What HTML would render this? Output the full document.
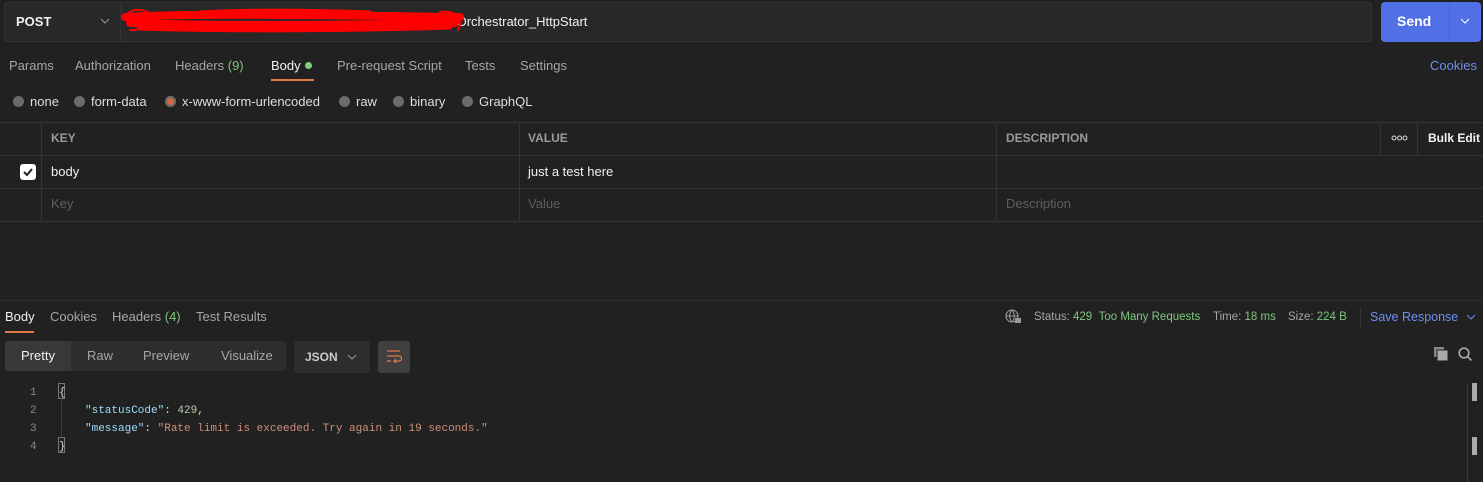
<!DOCTYPE html>
<html><head><meta charset="utf-8"><style>
*{margin:0;padding:0;box-sizing:border-box}
body{width:1483px;height:482px;background:#212121;font-family:"Liberation Sans",sans-serif;font-size:13px;color:#a6a6a6;position:relative;overflow:hidden}
.a{position:absolute;white-space:nowrap}
.w{color:#f2f2f2}
.g{color:#7ec67e}
.b{color:#6f8ef0}
.hl{position:absolute;height:1px;background:#343434}
.vl{position:absolute;width:1px;background:#343434}
.rd{position:absolute;width:11px;height:11px;border-radius:50%;background:#6b6b6b}
.mono{font-family:"Liberation Mono",monospace;font-size:11px}
</style></head><body>
<div class="a" style="left:4px;top:2px;width:1368px;height:40px;border:1px solid #353535;border-radius:4px;background:#282828"></div>
<div class="vl" style="left:120px;top:3px;height:38px"></div>
<div class="a w" style="left:16px;top:14px;font-weight:bold">POST</div>
<svg class="a" style="left:100px;top:18px" width="10" height="7"><path d="M1 1l4 4 4-4" stroke="#999" fill="none"/></svg>
<div class="a w" style="left:453px;top:14px;font-size:13px">/Orchestrator_HttpStart</div>
<svg class="a" style="left:110px;top:6px" width="360" height="30"><g stroke="#ff0000" fill="none" stroke-linecap="round"><path d="M15 11 C80 7 200 9 350 11" stroke-width="8"/><path d="M20 17 C100 20 250 19 345 17" stroke-width="8"/><path d="M30 22 C120 25 250 24 340 21" stroke-width="5"/><path d="M18 8 C22 2 35 3 40 8 C45 14 30 26 20 24 M330 6 C345 4 355 12 348 24" stroke-width="2"/><path d="M90 6 C140 3 200 4 260 6" stroke-width="3"/></g></svg>
<div class="a" style="left:1381px;top:2px;width:100px;height:40px;background:#5270e6;border-radius:4px"></div>
<div class="vl" style="left:1449px;top:2px;height:40px;background:#4a63cc"></div>
<div class="a" style="left:1397px;top:13px;color:#fff;font-weight:bold;font-size:14px">Send</div>
<svg class="a" style="left:1460px;top:18px" width="10" height="7"><path d="M1 1l4 4 4-4" stroke="#fff" fill="none"/></svg>
<div class="a" style="left:9px;top:58px">Params</div>
<div class="a" style="left:75px;top:58px">Authorization</div>
<div class="a" style="left:175px;top:58px">Headers <span class="g">(9)</span></div>
<div class="a w" style="left:271px;top:58px">Body</div>
<div class="a" style="left:305px;top:62px;width:7px;height:7px;border-radius:50%;background:#7ed07e"></div>
<div class="a" style="left:271px;top:79px;width:43px;height:2px;background:#e07a45"></div>
<div class="a" style="left:337px;top:58px">Pre-request Script</div>
<div class="a" style="left:465px;top:58px">Tests</div>
<div class="a" style="left:520px;top:58px">Settings</div>
<div class="a b" style="left:1430px;top:58px">Cookies</div>
<div class="rd" style="left:13px;top:96px"></div><div class="a" style="left:30px;top:94px;color:#ddd">none</div>
<div class="rd" style="left:74px;top:96px"></div><div class="a" style="left:91px;top:94px;color:#ddd">form-data</div>
<div class="rd" style="left:165px;top:96px;background:#d06a3a;box-shadow:0 0 0 2px #6b6b6b inset"></div><div class="a" style="left:182px;top:94px;color:#ddd">x-www-form-urlencoded</div>
<div class="rd" style="left:339px;top:96px"></div><div class="a" style="left:356px;top:94px;color:#ddd">raw</div>
<div class="rd" style="left:393px;top:96px"></div><div class="a" style="left:410px;top:94px;color:#ddd">binary</div>
<div class="rd" style="left:462px;top:96px"></div><div class="a" style="left:479px;top:94px;color:#ddd">GraphQL</div>
<div class="hl" style="left:0;top:122px;width:1483px"></div>
<div class="hl" style="left:0;top:155px;width:1483px"></div>
<div class="hl" style="left:0;top:188px;width:1483px"></div>
<div class="hl" style="left:0;top:221px;width:1483px"></div>
<div class="vl" style="left:41px;top:122px;height:99px"></div>
<div class="vl" style="left:519px;top:122px;height:99px"></div>
<div class="vl" style="left:996px;top:122px;height:99px"></div>
<div class="vl" style="left:1380px;top:122px;height:33px"></div>
<div class="vl" style="left:1417px;top:122px;height:33px"></div>
<div class="a" style="left:51px;top:131px;font-size:12px;font-weight:bold;color:#9a9a9a">KEY</div>
<div class="a" style="left:528px;top:131px;font-size:12px;font-weight:bold;color:#9a9a9a">VALUE</div>
<div class="a" style="left:1006px;top:131px;font-size:12px;font-weight:bold;color:#9a9a9a">DESCRIPTION</div>
<svg class="a" style="left:1391px;top:135px" width="17" height="6"><g stroke="#ddd" fill="none"><circle cx="3" cy="3" r="2"/><circle cx="8.5" cy="3" r="2"/><circle cx="14" cy="3" r="2"/></g></svg>
<div class="a w" style="left:1428px;top:131px;font-size:12px;font-weight:bold">Bulk Edit</div>
<div class="a" style="left:20px;top:164px;width:16px;height:16px;background:#fff;border-radius:3px"></div>
<svg class="a" style="left:20px;top:164px" width="16" height="16"><path d="M4 8l3 3 5-6" stroke="#222" stroke-width="2" fill="none"/></svg>
<div class="a w" style="left:51px;top:164px">body</div>
<div class="a w" style="left:528px;top:164px">just a test here</div>
<div class="a" style="left:51px;top:196px;color:#5e5e5e">Key</div>
<div class="a" style="left:528px;top:196px;color:#5e5e5e">Value</div>
<div class="a" style="left:1006px;top:196px;color:#5e5e5e">Description</div>
<div class="hl" style="left:0;top:300px;width:1483px;background:#2c2c2c"></div>
<div class="a w" style="left:5px;top:309px">Body</div>
<div class="a" style="left:5px;top:331px;width:29px;height:2px;background:#e07a45"></div>
<div class="a" style="left:50px;top:309px">Cookies</div>
<div class="a" style="left:112px;top:309px">Headers <span class="g">(4)</span></div>
<div class="a" style="left:196px;top:309px">Test Results</div>
<svg class="a" style="left:1005px;top:309px" width="18" height="16"><g stroke="#999" fill="none" stroke-width="1.1"><circle cx="7" cy="7" r="6"/><path d="M1 7h12M7 1c-3 3-3 9 0 12M7 1c3 3 3 9 0 12"/></g><rect x="10" y="9" width="6" height="5" fill="#999"/></svg>
<div class="a" style="left:1034px;top:311px;font-size:11.5px">Status: <span class="g">429 &nbsp;Too Many Requests</span></div>
<div class="a" style="left:1213px;top:311px;font-size:11.5px">Time: <span class="g">18 ms</span></div>
<div class="a" style="left:1288px;top:311px;font-size:11.5px">Size: <span class="g">224 B</span></div>
<div class="vl" style="left:1360px;top:307px;height:20px"></div>
<div class="a b" style="left:1370px;top:310px;font-size:12.5px">Save Response</div>
<svg class="a" style="left:1466px;top:314px" width="10" height="7"><path d="M1 1l4 4 4-4" stroke="#6f8ef0" fill="none"/></svg>
<div class="a" style="left:5px;top:341px;width:281px;height:30px;background:#2d2d2d;border-radius:3px"></div>
<div class="a" style="left:5px;top:341px;width:66px;height:30px;background:#383838;border-radius:3px 0 0 3px"></div>
<div class="a w" style="left:21px;top:348px">Pretty</div>
<div class="a" style="left:87px;top:348px">Raw</div>
<div class="a" style="left:143px;top:348px">Preview</div>
<div class="a" style="left:221px;top:348px">Visualize</div>
<div class="a" style="left:294px;top:341px;width:76px;height:32px;background:#2d2d2d;border-radius:3px"></div>
<div class="a" style="left:305px;top:350px;font-size:12px;font-weight:bold;color:#ccc">JSON</div>
<svg class="a" style="left:347px;top:354px" width="10" height="7"><path d="M1 1l4 4 4-4" stroke="#999" fill="none"/></svg>
<div class="a" style="left:378px;top:341px;width:32px;height:32px;background:#404040;border-radius:3px"></div>
<svg class="a" style="left:386px;top:350px" width="16" height="14"><g stroke="#e07a45" fill="none" stroke-width="1.2"><path d="M1 1h13M1 6h12a2.5 2.5 0 0 1 0 5h-5M1 11h4M10 9l-2 2 2 2"/></g></svg>
<svg class="a" style="left:1434px;top:347px" width="14" height="14"><rect x="0" y="0" width="10" height="10" fill="#888"/><rect x="3" y="3" width="11" height="11" fill="#aaa" stroke="#212121"/></svg>
<svg class="a" style="left:1458px;top:347px" width="14" height="14"><circle cx="6" cy="6" r="4.8" stroke="#aaa" stroke-width="1.6" fill="none"/><path d="M9.5 9.5l4 4" stroke="#aaa" stroke-width="1.6"/></svg>
<div class="a mono" style="left:30px;top:384px;line-height:18px;color:#888;text-align:right">1<br>2<br>3<br>4</div>
<div class="a" style="left:58px;top:383px;width:7px;height:16px;border:1px solid #777"></div>
<div class="a" style="left:58px;top:437px;width:7px;height:16px;border:1px solid #777"></div>
<div class="vl" style="left:61px;top:400px;height:36px;background:#3a3a3a"></div>
<div class="a mono" style="left:59px;top:384px;line-height:18px;color:#ddd">{<br><span style="padding-left:26px;color:#9cdcfe">"statusCode"</span>: <span style="color:#b5cea8">429</span>,<br><span style="padding-left:26px;color:#9cdcfe">"message"</span>: <span style="color:#ce9178">"Rate limit is exceeded. Try again in 19 seconds."</span><br>}</div>
<div class="vl" style="left:1467px;top:383px;height:99px;background:#3a3a3a"></div>
<div class="a" style="left:1472px;top:383px;width:5px;height:18px;background:#aaa"></div>
<div class="a" style="left:1472px;top:437px;width:5px;height:18px;background:#aaa"></div>
</body></html>
